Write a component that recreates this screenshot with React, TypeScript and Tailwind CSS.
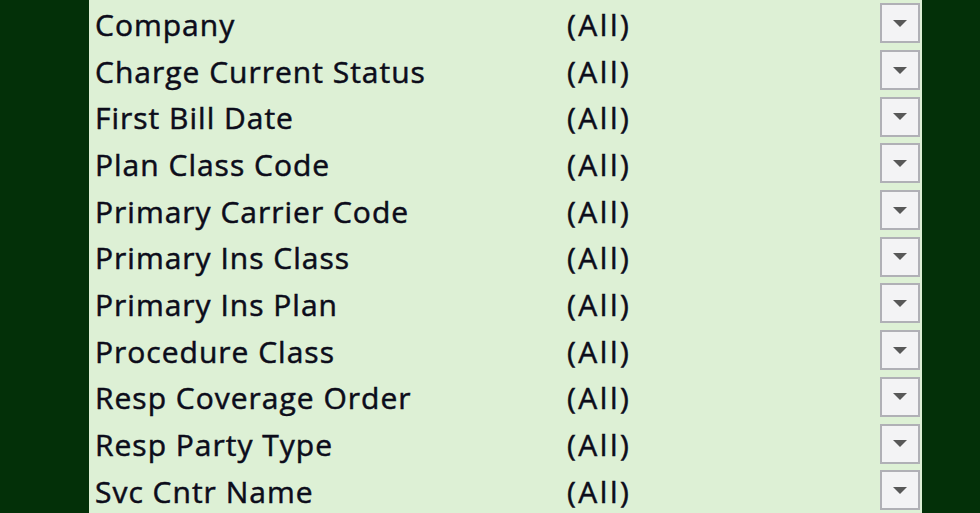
import React from "react";

const rows = [
  "Company",
  "Charge Current Status",
  "First Bill Date",
  "Plan Class Code",
  "Primary Carrier Code",
  "Primary Ins Class",
  "Primary Ins Plan",
  "Procedure Class",
  "Resp Coverage Order",
  "Resp Party Type",
  "Svc Cntr Name",
];

function DropButton() {
  return (
    <div className="w-[40px] h-[40px] border-2 border-[#b0b0b6] bg-[#f3f3f5] flex items-center justify-center">
      <svg width="16" height="9" viewBox="0 0 16 9">
        <polygon points="1,1 15,1 8,8" fill="#585858" />
      </svg>
    </div>
  );
}

export default function App() {
  return (
    <div className="w-[980px] h-[513px] bg-[#033008] overflow-hidden flex">
      <div className="ml-[89px] w-[833px] h-full bg-[#ddf0d5] flex flex-col">
        {rows.map((r) => (
          <div key={r} className="h-[46.7px] shrink-0 flex items-center">
            <div
              className="w-[478px] pl-[6px] pt-[3px] text-[30px] tracking-[1px] text-[#0c0c1a] leading-none [-webkit-text-stroke:0.5px_#0c0c1a]"
              style={{ fontFamily: "'Open Sans', sans-serif" }}
            >
              {r}
            </div>
            <div
              className="w-[313px] pt-[3px] text-[30px] tracking-[2.5px] text-[#0c0c1a] leading-none [-webkit-text-stroke:0.5px_#0c0c1a]"
              style={{ fontFamily: "'Open Sans', sans-serif" }}
            >
              (All)
            </div>
            <DropButton />
          </div>
        ))}
      </div>
    </div>
  );
}
